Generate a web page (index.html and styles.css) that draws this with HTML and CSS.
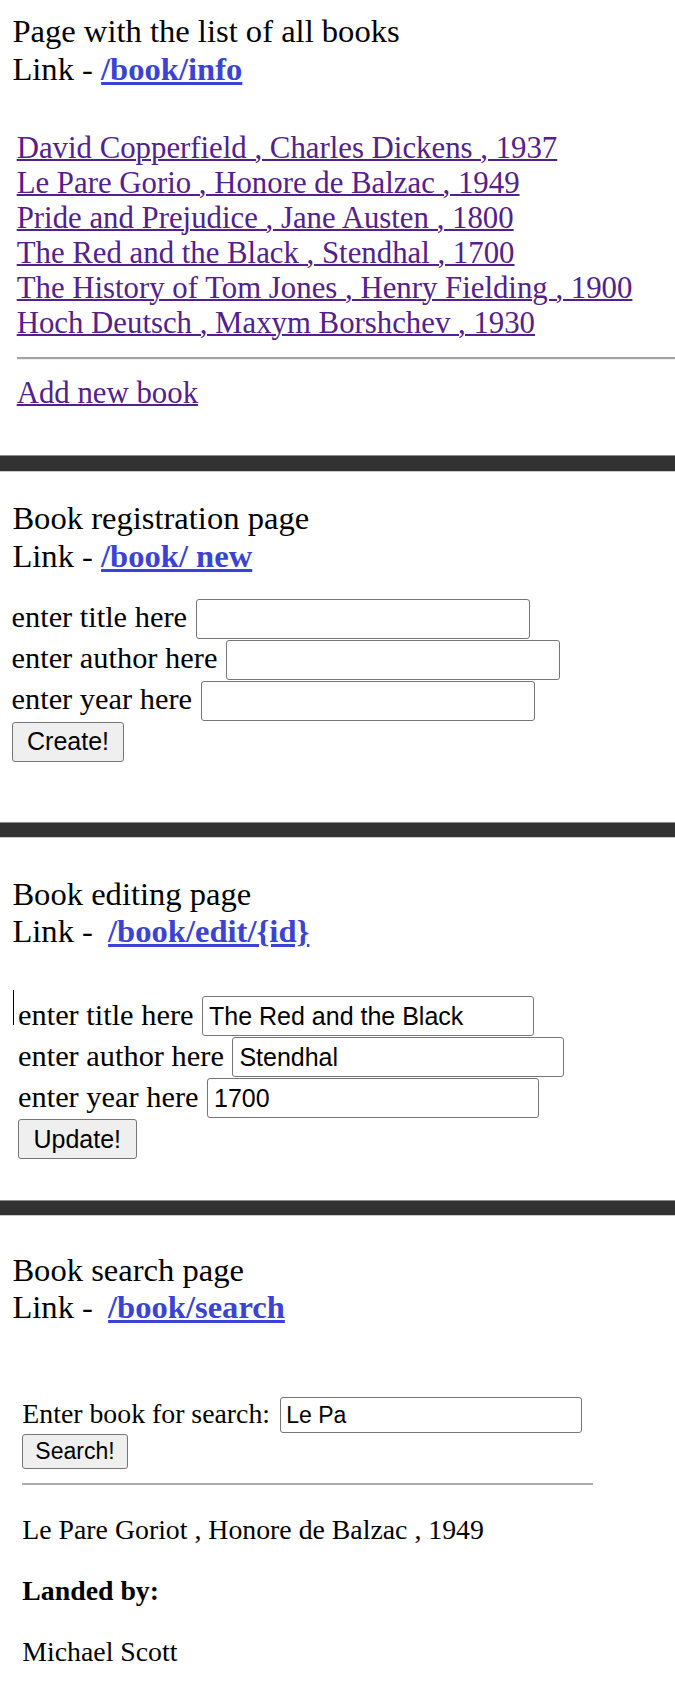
FILE: index.html
```html
<!DOCTYPE html>
<html>

<head>
    <meta charset="utf-8">
    <title>Books</title>
    <link rel="stylesheet" href="styles.css">
</head>

<body>
    <!-- list of all books -->
    <div class="shot" id="shot_list">
        <div class="caption">
            Page with the list of all books<br>
            Link - <a class="route" href="#">/book/info</a>
        </div>
        <div class="books">
            <a class="book" href="#">David Copperfield , Charles Dickens , 1937</a><br>
            <a class="book" href="#">Le Pare Gorio , Honore de Balzac , 1949</a><br>
            <a class="book" href="#">Pride and Prejudice , Jane Austen , 1800</a><br>
            <a class="book" href="#">The Red and the Black , Stendhal , 1700</a><br>
            <a class="book" href="#">The History of Tom Jones , Henry Fielding , 1900</a><br>
            <a class="book" href="#">Hoch Deutsch , Maxym Borshchev , 1930</a>
        </div>
        <hr class="list_hr">
        <div class="books">
            <a class="book" href="#">Add new book</a>
        </div>
    </div>

    <div class="bar"></div>

    <!-- registration -->
    <div class="shot" id="shot_new">
        <div class="caption">
            Book registration page<br>
            Link - <a class="route" href="#">/book/ new</a>
        </div>
        <form class="book_form">
            <div class="row"><label>enter title here</label><input type="text"></div>
            <div class="row"><label>enter author here</label><input type="text"></div>
            <div class="row"><label>enter year here</label><input type="text"></div>
            <button type="button">Create!</button>
        </form>
    </div>

    <div class="bar"></div>

    <!-- editing -->
    <div class="shot" id="shot_edit">
        <div class="caption">
            Book editing page<br>
            Link - <a class="route" href="#">/book/edit/{id}</a>
        </div>
        <form class="book_form">
            <div class="row"><span class="caret"></span><label>enter title here</label><input type="text" value="The Red and the Black"></div>
            <div class="row"><label>enter author here</label><input type="text" value="Stendhal"></div>
            <div class="row"><label>enter year here</label><input type="text" value="1700"></div>
            <button type="button">Update!</button>
        </form>
    </div>

    <div class="bar"></div>

    <!-- search -->
    <div class="shot" id="shot_search">
        <div class="caption">
            Book search page<br>
            Link - <a class="route" href="#">/book/search</a>
        </div>
        <div class="search">
            <form>
                <div class="row"><label>Enter book for search:</label><input type="text" value="Le Pa"></div>
                <button type="button">Search!</button>
            </form>
            <hr class="search_hr">
            <p>Le Pare Goriot , Honore de Balzac , 1949</p>
            <p><b>Landed by:</b></p>
            <p>Michael Scott</p>
        </div>
    </div>
</body>

</html>
```

FILE: styles.css
```css
body {
    margin: 0;
    font-family: "Liberation Serif", "Times New Roman", serif;
    color: #000;
    background: #fff;
}

.caption {
    font-size: 32.6px;
    line-height: 38px;
    padding-left: 12.4px;
}

a.route {
    font-weight: bold;
    color: #3b44d2;
    text-decoration-thickness: 3px;
}

#shot_edit a.route,
#shot_search a.route {
    margin-left: 7px;
}

.bar {
    height: 14.7px;
    background: #323232;
    border-top: 1px solid #8c8c8c;
    border-bottom: 1px solid #c8c8c8;
}

/* list */
#shot_list {
    padding: 11.7px 0 44.2px 0;
}

.books {
    margin-left: 16.7px;
    font-size: 30.8px;
    line-height: 35px;
}

#shot_list .caption + .books {
    margin-top: 43.3px;
}

a.book {
    color: #53208c;
    text-decoration-thickness: 2.4px;
}

hr.list_hr {
    height: 0;
    margin: 15.7px 0 16.1px 16.7px;
    border: none;
    border-top: 2px solid #a3a3a3;
    border-bottom: 1px solid #ededed;
}

/* forms */
.row {
    display: flex;
    align-items: baseline;
    margin-bottom: 1px;
}

.row label {
    white-space: nowrap;
}

input[type=text] {
    box-sizing: border-box;
    margin: 0;
    font-family: "Liberation Sans", Arial, sans-serif;
    color: #000;
    border: 1px solid #767676;
    border-radius: 3px;
    background: #fff;
}

button {
    display: block;
    box-sizing: border-box;
    margin: 0;
    font-family: "Liberation Sans", Arial, sans-serif;
    color: #000;
    background: #efefef;
    border: 1px solid #767676;
    border-radius: 3px;
}

.book_form {
    margin: 0;
    font-size: 30.4px;
}

.book_form input[type=text] {
    width: 334px;
    height: 40px;
    margin-left: 8.5px;
    padding: 0 6px;
    font-size: 25px;
}

.book_form button {
    height: 40px;
    padding: 0 14.5px;
    font-size: 25px;
}

#shot_new {
    padding: 27.5px 0 60.1px 0;
}

#shot_new .book_form {
    margin-top: 23.5px;
    padding-left: 11.5px;
}

#shot_edit {
    padding: 38px 0 40.2px 0;
}

#shot_edit .caption,
#shot_search .caption {
    line-height: 37px;
}

#shot_edit .book_form {
    margin-top: 39.5px;
    padding-left: 18px;
}

#shot_edit .book_form input[type=text] {
    width: 332px;
}

.caret {
    display: inline-block;
    width: 1px;
    height: 35px;
    background: #000;
    margin-left: -4.7px;
    margin-right: 3.7px;
}

/* search */
#shot_search {
    padding: 36px 0 20px 0;
}

.search {
    width: 571px;
    margin-top: 71.1px;
    padding-left: 22.3px;
    font-size: 27.8px;
}

.search form {
    margin: 0;
}

.search input[type=text] {
    width: 302px;
    height: 36px;
    margin-left: 9.7px;
    padding: 0 5.5px;
    font-size: 23px;
}

.search button {
    height: 35px;
    padding: 0 12px;
    font-size: 23px;
}

hr.search_hr {
    height: 0;
    margin: 14px 0 0 0;
    border: none;
    border-top: 2px solid #ababab;
}

.search p {
    margin: 28.8px 0;
}
```
